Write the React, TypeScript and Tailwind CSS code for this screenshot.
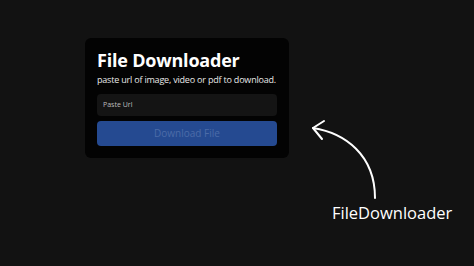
export default function App() {
  return (
    <div
      className="relative w-[474px] h-[266px] bg-[#121212] overflow-hidden"
      style={{ fontFamily: '"Open Sans", "Noto Sans", sans-serif' }}
    >
      <div className="absolute left-[85px] top-[38px] w-[204px] rounded-[6px] bg-[#030303] px-3 pt-[9px] pb-[12px]">
        <h1 className="text-[18px] leading-[26px] font-bold text-white tracking-[-0.2px]">File Downloader</h1>
        <p className="text-[9px] leading-[14px] text-[#e8e8e8] whitespace-nowrap tracking-[-0.2px]">
          paste url of image, video or pdf to download.
        </p>
        <div className="mt-[7px] h-[22px] rounded-[4px] bg-[#141414] flex items-center px-[6px]">
          <span className="text-[7px] text-[#bdbdbd]">Paste Url</span>
        </div>
        <button className="mt-[5px] w-full h-[25px] rounded-[4px] bg-[#254a91] text-[10px] text-[#4c6ca8]">
          Download File
        </button>
      </div>

      <svg className="absolute left-0 top-0" width="474" height="266" viewBox="0 0 474 266" fill="none">
        <path
          d="M313 128 C345 133 375 155 375 198"
          stroke="white"
          strokeWidth="2"
          strokeLinecap="round"
        />
        <path d="M324 121 L313 128 L322 139" stroke="white" strokeWidth="2" strokeLinecap="round" strokeLinejoin="round" />
      </svg>

      <div className="absolute left-[332px] top-[202px] text-[16.5px] leading-[22px] text-white tracking-[0px]">
        FileDownloader
      </div>
    </div>
  )
}
